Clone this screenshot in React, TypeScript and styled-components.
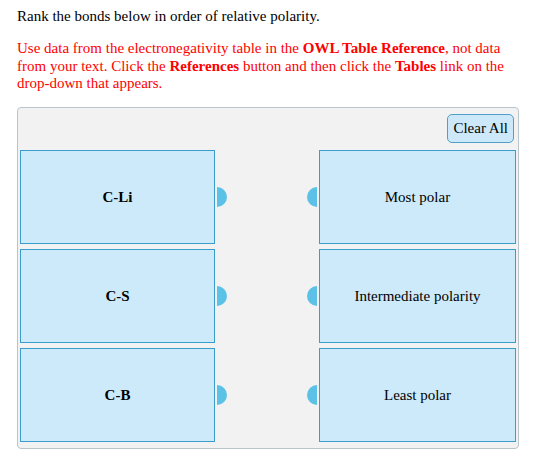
import React from 'react'
import styled, { createGlobalStyle } from 'styled-components'

const Global = createGlobalStyle`
  html, body {
    margin: 0;
    padding: 0;
    background: #fff;
  }
  body {
    font-family: "Liberation Serif", "Times New Roman", serif;
    color: #000;
  }
`

const Page = styled.div`
  padding: 8px 15px 0 17px;
`

const Prompt = styled.p`
  margin: 0 0 15px;
  font-size: 15px;
  line-height: 17.25px;
  color: ${p => (p.color ? p.color : '#000')};
`

const Panel = styled.div`
  box-sizing: border-box;
  width: 502px;
  height: 342px;
  margin-top: 3px;
  border: 1px solid #b9c5cd;
  border-radius: 4px;
  background: #f2f2f2;
  padding: 6px 2px 0 2px;
`

const Toolbar = styled.div`
  display: flex;
  justify-content: flex-end;
  padding-right: 2px;
  margin-bottom: 7px;
`

const ClearButton = styled.button`
  box-sizing: border-box;
  height: 29px;
  padding: 0 5px;
  font-family: "Liberation Serif", "Times New Roman", serif;
  font-size: 15px;
  color: #000;
  background: #cde9f9;
  border: 1px solid #4f9fca;
  border-radius: 5px;
`

const Rows = styled.div`
  display: flex;
  flex-direction: column;
  gap: 5px;
`

const Row = styled.div`
  display: grid;
  grid-template-columns: 195px 1fr 197px;
  height: 94px;
`

const Tile = styled.div<{ bold?: boolean }>`
  box-sizing: border-box;
  display: flex;
  align-items: center;
  justify-content: center;
  background: #cdeafa;
  border: 1px solid #3b9dcc;
  font-size: 15px;
  font-weight: ${p => (p.bold ? 'bold' : 'normal')};
`

const Connector = styled.div`
  display: flex;
  align-items: center;
  justify-content: space-between;
  padding: 0 2px;
`

const Knob = styled.span<{ side: 'left' | 'right' }>`
  display: block;
  width: 10px;
  height: 20px;
  background: #5bc1e7;
  border-radius: ${p => (p.side === 'right' ? '0 10px 10px 0' : '10px 0 0 10px')};
`

const pairs = [
  { bond: 'C-Li', label: 'Most polar' },
  { bond: 'C-S', label: 'Intermediate polarity' },
  { bond: 'C-B', label: 'Least polar' },
]

export default function App() {
  return (
    <Page>
      <Global />
      <Prompt>Rank the bonds below in order of relative polarity.</Prompt>
      <Prompt color="#ff0000">
        Use data from the electronegativity table in the <b>OWL Table Reference</b>, not data
        from your text. Click the <b>References</b> button and then click the <b>Tables</b> link on
        the drop-down that appears.
      </Prompt>
      <Panel>
        <Toolbar>
          <ClearButton>Clear All</ClearButton>
        </Toolbar>
        <Rows>
          {pairs.map(p => (
            <Row key={p.bond}>
              <Tile bold>{p.bond}</Tile>
              <Connector>
                <Knob side="right" />
                <Knob side="left" />
              </Connector>
              <Tile>{p.label}</Tile>
            </Row>
          ))}
        </Rows>
      </Panel>
    </Page>
  )
}
